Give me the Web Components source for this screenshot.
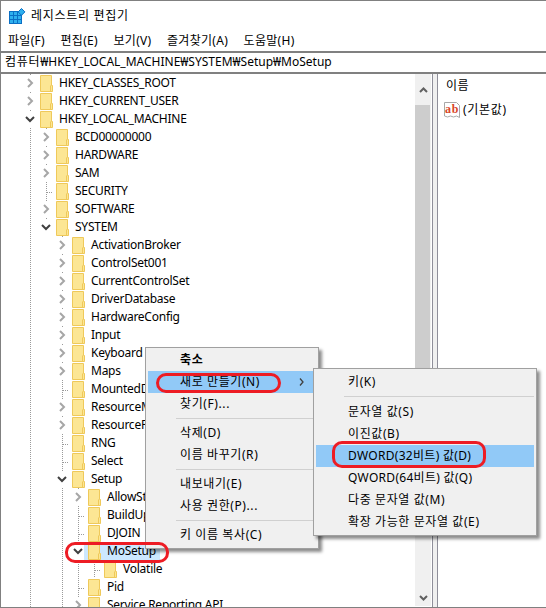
<!DOCTYPE html>
<html lang="ko">
<head>
<meta charset="utf-8">
<title>레지스트리 편집기</title>
<style>
  body { margin: 0; background: #fff; }
</style>
</head>
<body>
<reg-window>
  <reg-menubar slot="menu">
    <span>파일(F)</span><span>편집(E)</span><span>보기(V)</span><span>즐겨찾기(A)</span><span>도움말(H)</span>
  </reg-menubar>
  <reg-tree slot="tree">
    <tree-row level="0" state="closed">HKEY_CLASSES_ROOT</tree-row>
    <tree-row level="0" state="closed">HKEY_CURRENT_USER</tree-row>
    <tree-row level="0" state="open">HKEY_LOCAL_MACHINE</tree-row>
    <tree-row level="1" state="closed">BCD00000000</tree-row>
    <tree-row level="1" state="closed">HARDWARE</tree-row>
    <tree-row level="1" state="closed">SAM</tree-row>
    <tree-row level="1" state="leaf">SECURITY</tree-row>
    <tree-row level="1" state="closed">SOFTWARE</tree-row>
    <tree-row level="1" state="open">SYSTEM</tree-row>
    <tree-row level="2" state="closed">ActivationBroker</tree-row>
    <tree-row level="2" state="closed">ControlSet001</tree-row>
    <tree-row level="2" state="closed">CurrentControlSet</tree-row>
    <tree-row level="2" state="closed">DriverDatabase</tree-row>
    <tree-row level="2" state="closed">HardwareConfig</tree-row>
    <tree-row level="2" state="closed">Input</tree-row>
    <tree-row level="2" state="closed">Keyboard Layout</tree-row>
    <tree-row level="2" state="closed">Maps</tree-row>
    <tree-row level="2" state="leaf">MountedDevices</tree-row>
    <tree-row level="2" state="closed">ResourceManager</tree-row>
    <tree-row level="2" state="closed">ResourcePolicyStore</tree-row>
    <tree-row level="2" state="leaf">RNG</tree-row>
    <tree-row level="2" state="leaf">Select</tree-row>
    <tree-row level="2" state="open">Setup</tree-row>
    <tree-row level="3" state="closed">AllowStart</tree-row>
    <tree-row level="3" state="leaf">BuildUpdate</tree-row>
    <tree-row level="3" state="leaf">DJOIN</tree-row>
    <tree-row level="3" state="open" selected>MoSetup</tree-row>
    <tree-row level="4" state="leaf">Volatile</tree-row>
    <tree-row level="3" state="leaf">Pid</tree-row>
    <tree-row level="3" state="closed">Service Reporting API</tree-row>
  </reg-tree>
  <reg-values slot="values"></reg-values>

  <ctx-menu slot="overlay" style="left:145px;top:347px;width:168px">
    <ctx-item bold>축소</ctx-item>
    <ctx-item active arrow>새로 만들기(N)</ctx-item>
    <ctx-item>찾기(F)...</ctx-item>
    <ctx-sep></ctx-sep>
    <ctx-item>삭제(D)</ctx-item>
    <ctx-item>이름 바꾸기(R)</ctx-item>
    <ctx-sep></ctx-sep>
    <ctx-item>내보내기(E)</ctx-item>
    <ctx-item>사용 권한(P)...</ctx-item>
    <ctx-sep></ctx-sep>
    <ctx-item>키 이름 복사(C)</ctx-item>
  </ctx-menu>
  <ctx-menu slot="overlay" style="left:313px;top:368px;width:218px;padding-top:2px">
    <ctx-item>키(K)</ctx-item>
    <ctx-sep style="height:8px"></ctx-sep>
    <ctx-item>문자열 값(S)</ctx-item>
    <ctx-item>이진값(B)</ctx-item>
    <ctx-item active style="letter-spacing:.3px">DWORD(32비트) 값(D)</ctx-item>
    <ctx-item style="letter-spacing:.3px">QWORD(64비트) 값(Q)</ctx-item>
    <ctx-item>다중 문자열 값(M)</ctx-item>
    <ctx-item>확장 가능한 문자열 값(E)</ctx-item>
  </ctx-menu>

  <red-mark slot="overlay" style="left:155px;top:372px;width:125px;height:20px"></red-mark>
  <red-mark slot="overlay" style="left:331px;top:440px;width:154px;height:27px"></red-mark>
  <red-mark slot="overlay" style="left:64px;top:541px;width:104px;height:21px"></red-mark>
</reg-window>

<script>
const UI_FONT = `"Noto Sans", "Noto Sans CJK KR", sans-serif`;

class RegWindow extends HTMLElement {
  constructor() {
    super();
    this.attachShadow({ mode: "open" });
    this.shadowRoot.innerHTML = `
      <style>
        :host {
          display: flex;
          flex-direction: column;
          position: relative;
          width: 546px;
          height: 608px;
          box-sizing: border-box;
          overflow: hidden;
          background: #fff;
          color: #000;
          border-top: 1px solid #808080;
          border-left: 1px solid #808080;
          font: 12px/18px ${UI_FONT};
        }
        .title {
          height: 29px;
          display: flex;
          align-items: center;
          gap: 4px;
          padding-left: 8px;
          flex: none;
          letter-spacing: .7px;
        }
        .address {
          flex: none;
          height: 19px;
          line-height: 18px;
          padding-left: 5px;
          border-top: 2px solid #808080;
          border-bottom: 2px solid #808080;
          margin-left: -1px;
          box-sizing: content-box;
          white-space: nowrap;
        }
        .address span { letter-spacing: .7px; }
        .panes {
          flex: none;
          height: 533px;
          display: flex;
          border-bottom: 2px solid #808080;
          margin-bottom: 1px;
        }
        .splitter {
          flex: none;
          width: 4px;
          background: #f0f0f0;
          border-left: 1px solid #8f8f9a;
          border-right: 1px solid #8f8f9a;
        }
        ::slotted(reg-tree) { flex: none; }
        ::slotted(reg-values) { flex: 1; }
      </style>
      <div class="title">
        <svg width="18" height="16" viewBox="0 0 18 16">
          <rect x="0" y="3" width="13" height="13" fill="#0b6fc4"/>
          <g fill="#2fb0ee">
            <rect x="1" y="4" width="3" height="3"/><rect x="5" y="4" width="3" height="3"/><rect x="9" y="4" width="3" height="3"/>
            <rect x="1" y="8" width="3" height="3"/><rect x="5" y="8" width="3" height="3"/><rect x="9" y="8" width="3" height="3"/>
            <rect x="1" y="12" width="3" height="3"/><rect x="5" y="12" width="3" height="3"/><rect x="9" y="12" width="3" height="3"/>
          </g>
          <path d="M12.5 0.5l3.4 3.4-3.4 3.4-3.4-3.4z" fill="#2fb0ee" stroke="#0b6fc4"/>
        </svg>
        <span>레지스트리 편집기</span>
      </div>
      <slot name="menu"></slot>
      <div class="address"><span>컴퓨터</span>₩HKEY_LOCAL_MACHINE₩SYSTEM₩Setup₩MoSetup</div>
      <div class="panes">
        <slot name="tree"></slot>
        <div class="splitter"></div>
        <slot name="values"></slot>
      </div>
      <slot name="overlay"></slot>
    `;
  }
}

class RegMenubar extends HTMLElement {
  constructor() {
    super();
    this.attachShadow({ mode: "open" });
    this.shadowRoot.innerHTML = `
      <style>
        :host {
          display: flex;
          flex: none;
          height: 21px;
          gap: 15.5px;
          padding-left: 7px;
          align-items: center;
          letter-spacing: .3px;
        }
      </style>
      <slot></slot>
    `;
  }
}

class RegTree extends HTMLElement {
  constructor() {
    super();
    this.attachShadow({ mode: "open" });
    this.shadowRoot.innerHTML = `
      <style>
        :host {
          display: flex;
          width: 431px;
          height: 533px;
          overflow: hidden;
          letter-spacing: -.25px;
        }
        .rows { flex: 1; min-width: 0; overflow: hidden; }
        .bar {
          flex: none;
          width: 16px;
          margin: 0 1px 1px 0;
          background: #f0f0f0;
          display: flex;
          flex-direction: column;
        }
        .btn { height: 31px; display: flex; align-items: center; justify-content: center; flex: none; }
        .thumb { flex: none; height: 430px; background: #cdcdcd; margin: 0 1px 0 0; }
        .fill { flex: 1; }
      </style>
      <div class="rows"><slot></slot></div>
      <div class="bar">
        <div class="btn"><svg width="9" height="6" viewBox="0 0 9 6"><path d="M1 5l3.5-3.5L8 5" fill="none" stroke="#606060" stroke-width="2"/></svg></div>
        <div class="thumb"></div>
        <div class="fill"></div>
        <div class="btn" style="height:17px"><svg width="9" height="6" viewBox="0 0 9 6"><path d="M1 1l3.5 3.5L8 1" fill="none" stroke="#606060" stroke-width="2"/></svg></div>
      </div>
    `;
  }
}

class TreeRow extends HTMLElement {
  constructor() {
    super();
    this.attachShadow({ mode: "open" });
  }

  connectedCallback() {
    const level = Number(this.getAttribute("level"));
    const state = this.getAttribute("state");
    // dotted lines of the ancestors that go on past this row
    const xs = [29];
    if (level === 1) xs.push(45);
    if (level >= 2) xs.push(61);
    if (level >= 3) xs.push(77);
    if (level === 4) xs.push(93);
    const dots = "linear-gradient(#9a9a9a 50%, transparent 50%)";
    const arrows = {
      closed: `<svg width="7" height="10" viewBox="0 0 7 10"><path d="M1 1l4 4-4 4" fill="none" stroke="#a6a6a6" stroke-width="2"/></svg>`,
      open: `<svg width="10" height="7" viewBox="0 0 10 7"><path d="M1 1l4 4 4-4" fill="none" stroke="#404040" stroke-width="2"/></svg>`,
      leaf: "",
    };
    this.shadowRoot.innerHTML = `
      <style>
        :host {
          display: flex;
          align-items: center;
          height: 18px;
          white-space: nowrap;
          padding-left: ${23 + level * 16}px;
          background-image: ${xs.map(() => dots).join(",")};
          background-size: 1px 2px;
          background-repeat: repeat-y;
          background-position: ${xs.map((x) => `${x}px 0`).join(",")};
        }
        .arrow {
          flex: none;
          width: 12px;
          height: 16px;
          display: flex;
          align-items: center;
          justify-content: center;
        }
        .arrow.closed, .arrow.open { background: #fff; }
        .arrow.leaf {
          background: linear-gradient(90deg, #9a9a9a 50%, transparent 50%) 7px 9px / 2px 1px repeat-x;
          clip-path: inset(0 0 0 6px);
        }
        .item {
          display: flex;
          align-items: center;
          height: 18px;
          padding: 0 4px;
          gap: 6px;
          ${this.hasAttribute("selected") ? "background: #cce8ff;" : ""}
        }
      </style>
      <span class="arrow ${state}">${arrows[state]}</span>
      <span class="item">
        <svg width="13" height="17" viewBox="0 0 13 17">
          <path d="M.5.5h11v10h1v6H.5z" fill="#fce694" stroke="#efc95a"/>
          <path d="M10.5 10.5v6" stroke="#efc95a"/>
        </svg>
        <slot></slot>
      </span>
    `;
  }
}

class RegValues extends HTMLElement {
  constructor() {
    super();
    this.attachShadow({ mode: "open" });
    this.shadowRoot.innerHTML = `
      <style>
        :host { display: block; padding-left: 7px; }
        .head { height: 26px; line-height: 24px; padding-left: 1px; letter-spacing: .5px; }
        .row { display: flex; align-items: center; gap: 3px; height: 20px; margin-left: -1px; letter-spacing: .7px; }
      </style>
      <div class="head">이름</div>
      <div class="row">
        <svg width="16" height="16" viewBox="0 0 16 16">
          <path d="M.5.5h12l3 3v12l-3-1.5-3 1-3-1-3 1-3-1z" fill="#fff" stroke="#a8a8a8"/>
          <text x="1" y="11" font-family="Liberation Serif, serif" font-weight="700" font-size="12" fill="#d8452a">ab</text>
        </svg>
        <span>(기본값)</span>
      </div>
    `;
  }
}

class CtxMenu extends HTMLElement {
  constructor() {
    super();
    this.attachShadow({ mode: "open" });
    this.shadowRoot.innerHTML = `
      <style>
        :host {
          display: block;
          position: absolute;
          margin: -1px 0 0 -1px;
          padding: 1px 2px 2px;
          background: #f0f0f0;
          border: 1px solid #a0a0a0;
          box-shadow: 3px 3px 3px rgba(0, 0, 0, .45);
          letter-spacing: .6px;
        }
      </style>
      <slot></slot>
    `;
  }
}

class CtxItem extends HTMLElement {
  constructor() {
    super();
    this.attachShadow({ mode: "open" });
  }

  connectedCallback() {
    const arrow = this.hasAttribute("arrow")
      ? `<svg width="5" height="8" viewBox="0 0 5 8"><path d="M1 .5l3 3.5-3 3.5" fill="none" stroke="#404040" stroke-width="1.3"/></svg>`
      : "";
    this.shadowRoot.innerHTML = `
      <style>
        :host {
          display: flex;
          align-items: center;
          justify-content: space-between;
          height: 22px;
          padding: 0 12px 0 32px;
          white-space: nowrap;
          ${this.hasAttribute("active") ? "background: #91c9f7;" : ""}
          ${this.hasAttribute("bold") ? "font-weight: 700;" : ""}
        }
      </style>
      <span><slot></slot></span>${arrow}
    `;
  }
}

class CtxSep extends HTMLElement {
  constructor() {
    super();
    this.attachShadow({ mode: "open" });
    this.shadowRoot.innerHTML = `
      <style>
        :host { display: block; height: 7px; padding-left: 28px; }
        div { height: 3px; border-bottom: 1px solid #d0d0d0; }
      </style>
      <div></div>
    `;
  }
}

class RedMark extends HTMLElement {
  constructor() {
    super();
    this.attachShadow({ mode: "open" });
    this.shadowRoot.innerHTML = `
      <style>
        :host {
          display: block;
          position: absolute;
          box-sizing: border-box;
          border: 3px solid #ed1c24;
          border-radius: 10px;
        }
      </style>
    `;
  }
}

customElements.define("reg-window", RegWindow);
customElements.define("reg-menubar", RegMenubar);
customElements.define("reg-tree", RegTree);
customElements.define("tree-row", TreeRow);
customElements.define("reg-values", RegValues);
customElements.define("ctx-menu", CtxMenu);
customElements.define("ctx-item", CtxItem);
customElements.define("ctx-sep", CtxSep);
customElements.define("red-mark", RedMark);
</script>
</body>
</html>
